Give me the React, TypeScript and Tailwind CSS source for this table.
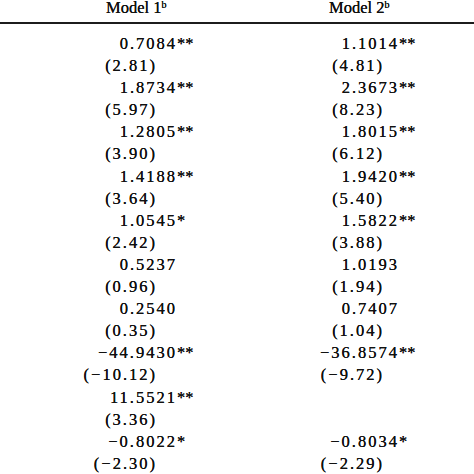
const rows = [
  { a: ['0.7084', '**', '(2.81)'], b: ['1.1014', '**', '(4.81)'] },
  { a: ['1.8734', '**', '(5.97)'], b: ['2.3673', '**', '(8.23)'] },
  { a: ['1.2805', '**', '(3.90)'], b: ['1.8015', '**', '(6.12)'] },
  { a: ['1.4188', '**', '(3.64)'], b: ['1.9420', '**', '(5.40)'] },
  { a: ['1.0545', '*', '(2.42)'], b: ['1.5822', '**', '(3.88)'] },
  { a: ['0.5237', '', '(0.96)'], b: ['1.0193', '', '(1.94)'] },
  { a: ['0.2540', '', '(0.35)'], b: ['0.7407', '', '(1.04)'] },
  { a: ['−44.9430', '**', '(−10.12)'], b: ['−36.8574', '**', '(−9.72)'] },
  { a: ['11.5521', '**', '(3.36)'], b: ['', '', ''] },
  { a: ['−0.8022', '*', '(−2.30)'], b: ['−0.8034', '*', '(−2.29)'] },
]

export default function App() {
  return (
    <div className="w-[474px] h-[474px] overflow-hidden bg-white text-[#111] font-['Liberation_Serif',serif] [text-shadow:0_0_0.5px_#000]">
      <div className="flex text-[16.5px] leading-[16px] h-[16px]">
        <div className="w-[329px] pl-[106px]">
          Model 1<span className="text-[10px] align-top leading-none">b</span>
        </div>
        <div>
          Model 2<span className="text-[10px] align-top leading-none">b</span>
        </div>
      </div>
      <div className="mt-[6px] h-[2px] bg-[#1c1c1c]" />
      <div className="mt-[9px] text-[16.5px] leading-[22.1px]">
        {rows.map((r, i) => (
          <div key={i}>
            <div className="grid grid-cols-[177px_222px_1fr] h-[22.1px]">
              <span className="text-right tracking-[2px]">{r.a[0]}</span>
              <div className="flex justify-between">
                <span>{r.a[1]}</span>
                <span className="tracking-[2px]">{r.b[0]}</span>
              </div>
              <span>{r.b[1]}</span>
            </div>
            <div className="grid grid-cols-[157px_227px] h-[22.1px]">
              <span className="text-right tracking-[2px]">{r.a[2]}</span>
              <span className="text-right tracking-[2px]">{r.b[2]}</span>
            </div>
          </div>
        ))}
      </div>
    </div>
  )
}
